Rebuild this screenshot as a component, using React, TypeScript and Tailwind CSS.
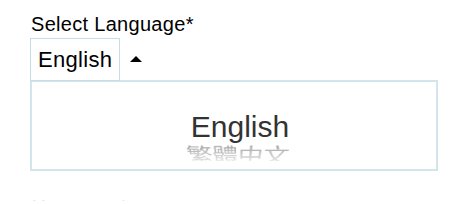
export default function App() {
  return (
    <div className="min-h-[204px] bg-white pl-[30px] pt-[12px] font-['Liberation_Sans','Noto_Sans_CJK_TC',sans-serif] text-black">
      <div className="pl-[1px] text-[20px] leading-[24px] tracking-[0.3px]">Select Language*</div>

      <div className="mt-[2px] flex items-center">
        <div className="flex h-[43px] items-center border border-[#c6dde6] px-[7px] text-[22px] tracking-[0.3px]">English</div>
        <svg className="ml-[10px] mt-[-2px] h-[6px] w-[12px]" viewBox="0 0 12 6">
          <path d="M6 0L12 6H0z" fill="#000" />
        </svg>
      </div>

      <div className="-mt-px flex h-[91px] w-[408px] flex-col items-center overflow-hidden border-2 border-[#d3e4ea]">
        <div className="ml-[12px] mt-[28px] text-[30px] leading-[34px] text-[#333]">English</div>
        <div className="ml-[8px] h-[17px] overflow-hidden [perspective:120px]">
          <div className="origin-top text-[27px] leading-[32px] text-[#a0a0a0] [transform:rotateX(-38deg)] [mask-image:linear-gradient(to_bottom,black,transparent)]">
            繁體中文
          </div>
        </div>
      </div>

      <div className="mt-[24px] h-[6px] overflow-hidden pl-[2px] text-[19px] leading-[24px] text-[#e4e4e4]">
        Username*
      </div>
    </div>
  );
}
